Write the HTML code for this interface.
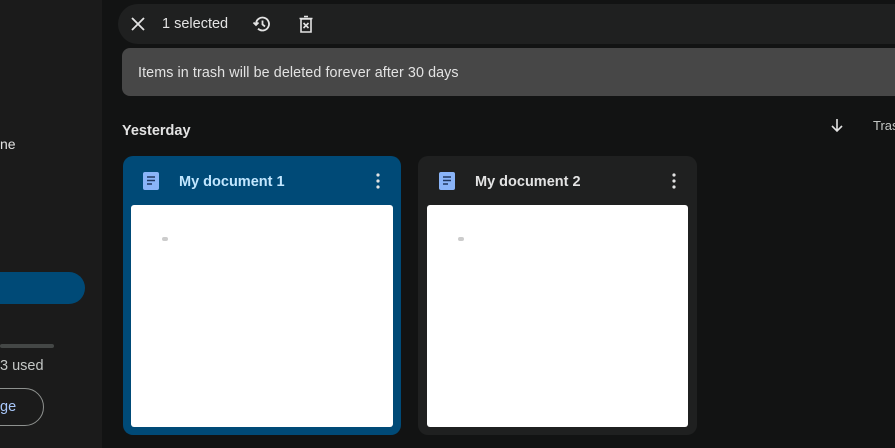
<!DOCTYPE html>
<html><head><style>
body{margin:0;width:895px;height:448px;overflow:hidden;background:#121313;font-family:"Liberation Sans",sans-serif;position:relative}
.a{position:absolute}
</style></head><body>
<div class="a" style="left:0;top:0;width:102px;height:448px;background:#1b1b1b"></div>
<div class="a" style="left:0;top:136px;color:#e3e3e3;font-size:14px">ne</div>
<div class="a" style="left:-20px;top:272px;width:105px;height:32px;border-radius:16px;background:#004a77"></div>
<div class="a" style="left:0;top:344px;width:54px;height:4px;border-radius:2px;background:#444746"></div>
<div class="a" style="left:0;top:358px;color:#c4c7c5;font-size:14.5px">3 used</div>
<div class="a" style="left:-40px;top:388px;width:82px;height:36px;border:1px solid #8e918f;border-radius:19px"></div>
<div class="a" style="left:0;top:399px;color:#a8c7fa;font-size:14.5px">ge</div>

<div class="a" style="left:118px;top:4px;width:800px;height:40px;border-radius:20px;background:#1f2020"></div>
<svg class="a" style="left:130px;top:16px" width="16" height="16" viewBox="0 0 16 16"><path d="M2 2L14 14M14 2L2 14" stroke="#e3e3e3" stroke-width="1.8"/></svg>
<div class="a" style="left:162px;top:16px;color:#e3e3e3;font-size:14.5px">1 selected</div>
<svg class="a" style="left:252px;top:14px" width="20" height="20" viewBox="0 0 20 20" fill="none" stroke="#e3e3e3" stroke-width="1.8"><path d="M4 10a6.5 6.5 0 1 1 2 4.7"/><path d="M1.5 8.5L4 11l2.5-2.5"/><path d="M10.5 6.5v4l2.5 2"/></svg>
<svg class="a" style="left:298px;top:15px" width="16" height="18" viewBox="0 0 16 18" fill="none" stroke="#e3e3e3" stroke-width="1.6"><path d="M3 4h10v13H3zM1.5 3.5h13M6 1.5h4"/><path d="M5.5 8l5 5M10.5 8l-5 5"/></svg>

<div class="a" style="left:122px;top:48px;width:800px;height:48px;border-radius:8px;background:#474747"></div>
<div class="a" style="left:138px;top:65px;color:#e3e3e3;font-size:14.3px;letter-spacing:0.1px">Items in trash will be deleted forever after 30 days</div>

<div class="a" style="left:122px;top:123px;color:#e3e3e3;font-size:14.5px;font-weight:bold">Yesterday</div>
<svg class="a" style="left:829px;top:117px" width="16" height="16" viewBox="0 0 16 16" fill="none" stroke="#e3e3e3" stroke-width="1.6"><path d="M8 2v12M3 9l5 5 5-5"/></svg>
<div class="a" style="left:873px;top:118px;color:#c4c7c5;font-size:13px">Trash</div>

<div class="a" style="left:123px;top:156px;width:278px;height:279px;border-radius:10px;background:#004a77"></div>
<div class="a" style="left:131px;top:205px;width:262px;height:222px;border-radius:3px;background:#fff"></div>
<div class="a" style="left:162px;top:237px;width:6px;height:4px;border-radius:2px;background:#ccc"></div>
<div class="a" style="left:418px;top:156px;width:279px;height:279px;border-radius:10px;background:#1f2020"></div>
<div class="a" style="left:427px;top:205px;width:261px;height:222px;border-radius:3px;background:#fff"></div>
<div class="a" style="left:458px;top:237px;width:6px;height:4px;border-radius:2px;background:#ccc"></div>

<svg class="a" style="left:143px;top:172px" width="16" height="18" viewBox="0 0 16 18"><rect width="16" height="18" rx="2" fill="#8ab4f8"/><path d="M4 5h8M4 8.5h8M4 12h5" stroke="#1f3760" stroke-width="1.6"/></svg>
<div class="a" style="left:179px;top:174px;color:#c2e7ff;font-size:14.5px;font-weight:bold">My document 1</div>
<svg class="a" style="left:376px;top:173px" width="4" height="16"><circle cx="2" cy="2" r="1.6" fill="#e3e3e3"/><circle cx="2" cy="8" r="1.6" fill="#e3e3e3"/><circle cx="2" cy="14" r="1.6" fill="#e3e3e3"/></svg>

<svg class="a" style="left:439px;top:172px" width="16" height="18" viewBox="0 0 16 18"><rect width="16" height="18" rx="2" fill="#8ab4f8"/><path d="M4 5h8M4 8.5h8M4 12h5" stroke="#1f3760" stroke-width="1.6"/></svg>
<div class="a" style="left:475px;top:174px;color:#e3e3e3;font-size:14.5px;font-weight:bold">My document 2</div>
<svg class="a" style="left:672px;top:173px" width="4" height="16"><circle cx="2" cy="2" r="1.6" fill="#e3e3e3"/><circle cx="2" cy="8" r="1.6" fill="#e3e3e3"/><circle cx="2" cy="14" r="1.6" fill="#e3e3e3"/></svg>
</body></html>
